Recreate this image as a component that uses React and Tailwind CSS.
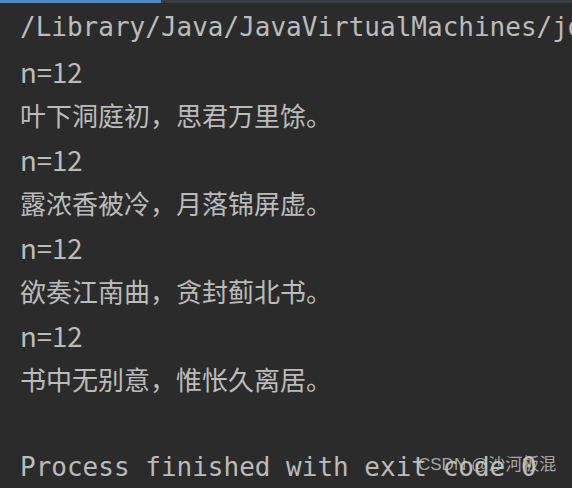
export default function App() {
  const mono = "font-['DejaVu_Sans_Mono','Liberation_Mono',monospace] text-[26px]";
  const num = "font-['Noto_Sans_CJK_SC',sans-serif] text-[27.5px]";
  const cjk = "font-['Noto_Sans_CJK_SC',sans-serif] text-[26px]";

  const lines = [
    { text: '/Library/Java/JavaVirtualMachines/jdk', font: mono },
    { text: 'n=12', font: num },
    { text: '叶下洞庭初，思君万里馀。', font: cjk },
    { text: 'n=12', font: num },
    { text: '露浓香被冷，月落锦屏虚。', font: cjk },
    { text: 'n=12', font: num },
    { text: '欲奏江南曲，贪封蓟北书。', font: cjk },
    { text: 'n=12', font: num },
    { text: '书中无别意，惟怅久离居。', font: cjk },
    { text: '', font: mono },
    { text: 'Process finished with exit code 0', font: mono },
  ];

  return (
    <div className="relative w-[572px] h-[488px] overflow-hidden bg-[#2b2b2b]">
      {/* tab strip */}
      <div className="flex h-[3px]">
        <div className="w-[161px] bg-[#4a88c7]" />
        <div className="flex-1 bg-[#3a3e42]" />
      </div>

      {/* console output */}
      <div className="pl-[20px] pt-[2px] text-[#bbbbbb] whitespace-pre">
        {lines.map((l, i) => (
          <div key={i} className={`h-[44px] leading-[44px] ${l.font}`}>
            {l.text}
          </div>
        ))}
      </div>

      {/* watermark */}
      <div className="absolute left-[418px] top-[453px] text-[17px] leading-[24px] text-[#c8c8c8]/80 font-['Liberation_Sans','Noto_Sans_CJK_SC',sans-serif] whitespace-nowrap">
        CSDN @沙河板混
      </div>
    </div>
  );
}
